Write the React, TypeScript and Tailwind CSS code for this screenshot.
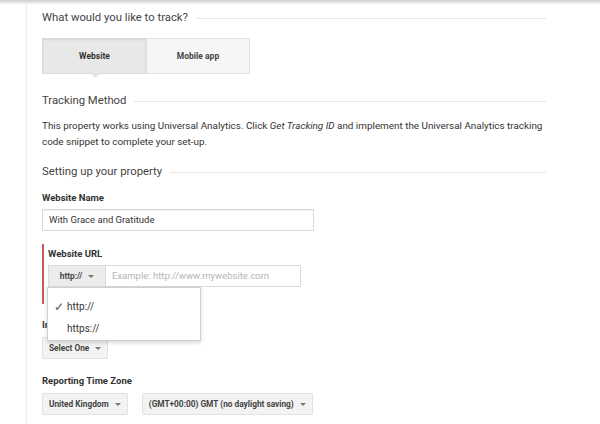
import { ReactNode } from 'react';

function SectionHeading({ children }: { children: ReactNode }) {
  return (
    <div className="flex h-5 items-center gap-2">
      <span className="whitespace-nowrap text-[11.3px] text-[#444]">{children}</span>
      <div className="h-px flex-1 bg-[#e6e6e6]" />
    </div>
  );
}

function Caret() {
  return <span className="ml-[6px] inline-block h-0 w-0 border-x-[3px] border-t-[3px] border-x-transparent border-t-[#777]" />;
}

function SelectButton({ label, className = '' }: { label: string; className?: string }) {
  return (
    <div
      className={`flex h-[22px] items-center rounded-[1px] border border-[#e2e2e2] bg-[#f3f3f3] px-[6px] text-[8.3px] font-bold text-[#444] ${className}`}
    >
      {label}
      <Caret />
    </div>
  );
}

function Label({ children }: { children: ReactNode }) {
  return <div className="h-4 text-[9.5px] font-bold leading-4 text-[#333]">{children}</div>;
}

export default function App() {
  return (
    <div className="relative h-[424px] w-[600px] overflow-hidden bg-white font-['Roboto',sans-serif]">
      <div className="absolute inset-x-0 top-0 h-[5px] bg-gradient-to-b from-[#cfcfcf] to-white" />
      <div className="ml-[26px] h-full border-l border-[#ececec] pl-[15px] pr-[54px] pt-[8px]">
        <SectionHeading>What would you like to track?</SectionHeading>

        <div className="mt-[10px] flex w-[208px]">
          <div className="relative flex h-9 w-[105px] items-center justify-center border border-[#dcdcdc] bg-[#e8e8e8] text-[8.5px] font-bold text-[#333] shadow-[inset_0_1px_2px_rgba(0,0,0,0.08)]">
            Website
            <span className="absolute -bottom-[5px] left-1/2 h-0 w-0 -translate-x-1/2 border-x-[5px] border-t-[5px] border-x-transparent border-t-[#e3e3e3]" />
          </div>
          <div className="flex h-9 flex-1 items-center justify-center border border-l-0 border-[#e2e2e2] bg-[#f6f6f6] text-[8.5px] font-bold text-[#444]">
            Mobile app
          </div>
        </div>

        <div className="mt-[17px]">
          <SectionHeading>Tracking Method</SectionHeading>
        </div>
        <p className="mt-[7px] w-[512px] text-[9.9px] leading-4 text-[#333]">
          This property works using Universal Analytics. Click <i>Get Tracking ID</i> and implement the Universal Analytics tracking
          code snippet to complete your set-up.
        </p>

        <div className="mt-[12px]">
          <SectionHeading>Setting up your property</SectionHeading>
        </div>

        <div className="mt-[8px]">
          <Label>Website Name</Label>
          <div className="mt-[3px] flex h-[22px] w-[272px] items-center border border-[#dadada] px-[6px] text-[9.5px] text-[#333] shadow-[inset_0_1px_1px_rgba(0,0,0,0.06)]">
            With Grace and Gratitude
          </div>
        </div>

        <div className="relative mt-[13px] border-l-2 border-[#c9585a] pb-[17px] pl-[4px] pt-[2px]">
          <Label>Website URL</Label>
          <div className="mt-[3px] flex h-[22px] w-[253px]">
            <div className="flex h-full w-[58px] items-center justify-center border border-[#dcdcdc] bg-[#ececec] text-[8.3px] font-bold text-[#444]">
              http://
              <Caret />
            </div>
            <div className="flex h-full flex-1 items-center border border-l-0 border-[#dadada] px-[6px] text-[9.5px] text-[#b5b5b5]">
              Example: http://www.mywebsite.com
            </div>
          </div>
        </div>

        <div className="relative mt-[13px]">
          <Label>Industry Category</Label>
          <SelectButton label="Select One" className="mt-[4px] w-fit" />
          <div className="absolute -top-[30px] left-[5px] z-10 w-[154px] border border-[#d0d0d0] bg-white pb-[2px] pt-[9px] shadow-[0_2px_4px_rgba(0,0,0,0.15)]">
            <div className="flex h-[19px] items-center text-[10px] text-[#333]">
              <span className="w-[19px] pl-[6px] text-[12px] leading-none text-[#555]">✓</span>
              http://
            </div>
            <div className="mt-[3px] flex h-[19px] items-center pl-[19px] text-[10px] text-[#333]">https://</div>
          </div>
        </div>

        <div className="mt-[14px]">
          <Label>Reporting Time Zone</Label>
          <div className="mt-[4px] flex gap-[14px]">
            <SelectButton label="United Kingdom" />
            <SelectButton label="(GMT+00:00) GMT (no daylight saving)" />
          </div>
        </div>
      </div>
    </div>
  );
}
